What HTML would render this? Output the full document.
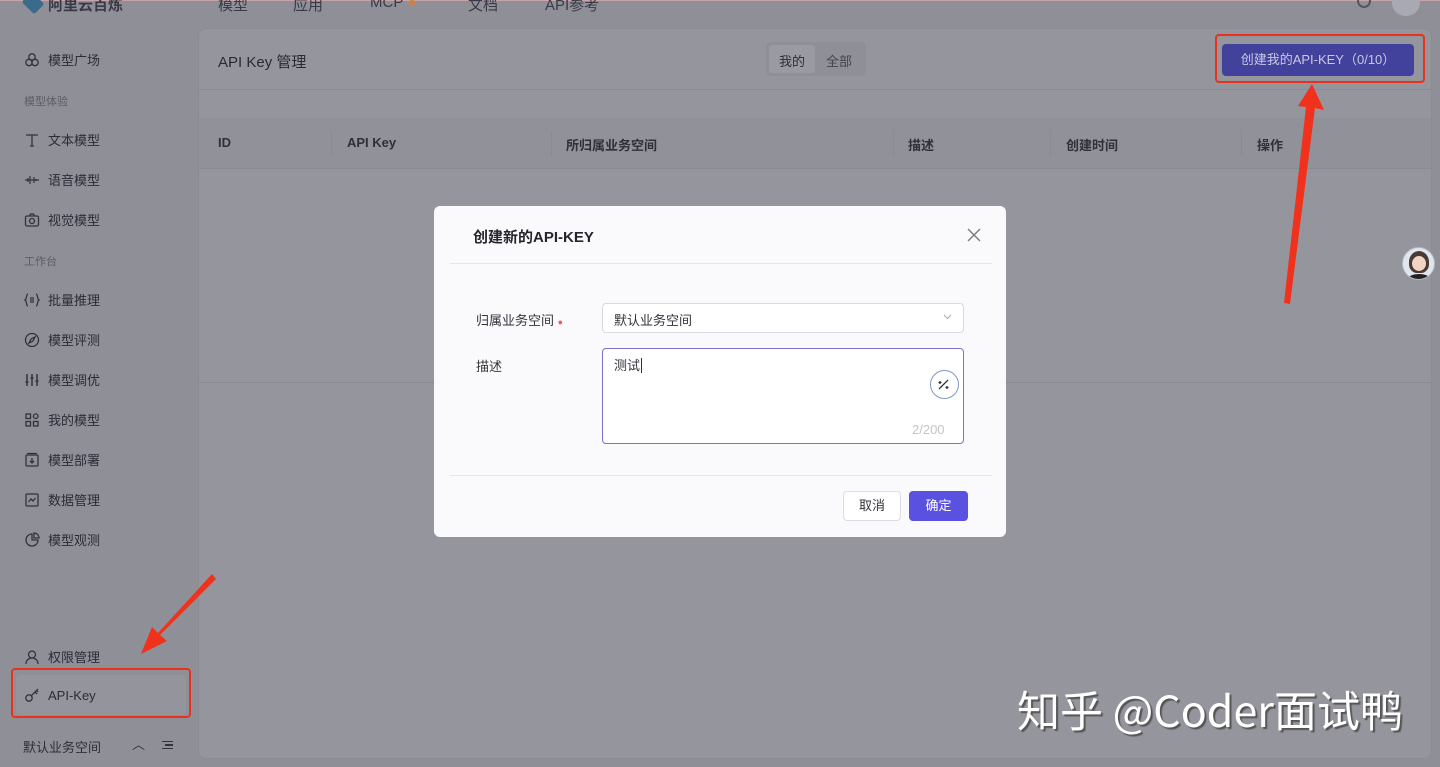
<!DOCTYPE html>
<html><head><meta charset="utf-8"><style>
*{margin:0;padding:0;box-sizing:border-box}
body{width:1440px;height:767px;overflow:hidden;background:#8f8f97;font-family:"Liberation Sans","Noto Sans CJK SC",sans-serif;position:relative;color:#2a2a35}
.a{position:absolute}
.nav{font-size:14px;color:#3a3a46}
.side{font-size:13px;color:#2c2c38}
.side .it{position:absolute;left:24px;display:flex;align-items:center;gap:8px}
.ic{width:16px;height:16px;display:inline-block}
.grp{position:absolute;left:24px;font-size:11px;color:#5c5c66}
.panel{left:198px;top:28px;width:1234px;height:731px;background:#95959d;border-radius:8px;border:1px solid #8b8b93}
.th{font-size:13px;font-weight:bold;color:#30303a;top:135px}
.modal{left:434px;top:206px;width:572px;height:331px;background:#fafafc;border-radius:6px}
</style></head><body>
<div class="a" style="left:0;top:0;width:1440px;height:1px;background:#c9a3a8"></div>
<div class="a" style="left:22px;top:-6px;width:22px;height:18px;background:#3a6b8a;border-radius:3px;transform:rotate(45deg) scale(.8)"></div>
<div class="a nav" style="left:48px;top:-6px;font-size:15px;font-weight:bold">阿里云百炼</div>
<div class="a nav" style="left:218px;top:-6px;font-size:15px">模型</div>
<div class="a nav" style="left:293px;top:-6px;font-size:15px">应用</div>
<div class="a nav" style="left:370px;top:-6px;font-size:15px">MCP <span style="color:#c9834a">●</span></div>
<div class="a nav" style="left:468px;top:-6px;font-size:15px">文档</div>
<div class="a nav" style="left:545px;top:-6px;font-size:15px">API参考</div>
<div class="a" style="left:1357px;top:-6px;width:14px;height:14px;border:2px solid #55555f;border-radius:50%"></div>
<div class="a" style="left:1392px;top:-10px;width:28px;height:26px;background:#a9a9b4;border-radius:50%"></div>

<div class="side">
<div class="it" style="top:50px"><svg class="ic" viewBox="0 0 16 16" fill="none" stroke="#33333d" stroke-width="1.3"><circle cx="8" cy="5" r="3.2"/><circle cx="5" cy="10.5" r="3.2"/><circle cx="11" cy="10.5" r="3.2"/></svg>模型广场</div>
<div class="grp" style="top:93px">模型体验</div>
<div class="it" style="top:130px"><svg class="ic" viewBox="0 0 16 16" fill="none" stroke="#33333d" stroke-width="1.3"><path d="M2 3h12M8 3v11M6 14h4"/></svg>文本模型</div>
<div class="it" style="top:170px"><svg class="ic" viewBox="0 0 16 16" fill="none" stroke="#33333d" stroke-width="1.2"><path d="M1 8h14M4 6v4M6 4v8M10 5v6M12 7v2"/></svg>语音模型</div>
<div class="it" style="top:210px"><svg class="ic" viewBox="0 0 16 16" fill="none" stroke="#33333d" stroke-width="1.3"><rect x="1.5" y="4" width="13" height="10" rx="1.5"/><circle cx="8" cy="9" r="2.5"/><path d="M5.5 4l1-2h3l1 2"/></svg>视觉模型</div>
<div class="grp" style="top:253px">工作台</div>
<div class="it" style="top:290px"><svg class="ic" viewBox="0 0 16 16" fill="none" stroke="#33333d" stroke-width="1.3"><path d="M4 2C2 2 3 7 1 8c2 1 1 6 3 6M12 2c2 0 1 5 3 6-2 1-1 6-3 6M6 6h4M6 8h4M6 10h4"/></svg>批量推理</div>
<div class="it" style="top:330px"><svg class="ic" viewBox="0 0 16 16" fill="none" stroke="#33333d" stroke-width="1.3"><circle cx="8" cy="8" r="6.5"/><path d="M5 11l2-4 4-2-2 4z"/></svg>模型评测</div>
<div class="it" style="top:370px"><svg class="ic" viewBox="0 0 16 16" fill="none" stroke="#33333d" stroke-width="1.5"><path d="M3 2v12M8 2v12M13 2v12M1.5 10h3M6.5 6h3M11.5 9h3"/></svg>模型调优</div>
<div class="it" style="top:410px"><svg class="ic" viewBox="0 0 16 16" fill="none" stroke="#33333d" stroke-width="1.3"><rect x="2" y="2" width="4.5" height="4.5"/><rect x="2" y="9.5" width="4.5" height="4.5"/><rect x="9.5" y="9.5" width="4.5" height="4.5"/><circle cx="11.7" cy="4.2" r="2.3"/></svg>我的模型</div>
<div class="it" style="top:450px"><svg class="ic" viewBox="0 0 16 16" fill="none" stroke="#33333d" stroke-width="1.3"><rect x="2" y="3" width="12" height="11" rx="1"/><path d="M3 1.5h10M8 6v5M6 9l2 2 2-2"/></svg>模型部署</div>
<div class="it" style="top:490px"><svg class="ic" viewBox="0 0 16 16" fill="none" stroke="#33333d" stroke-width="1.3"><rect x="2" y="2" width="12" height="12" rx="1"/><path d="M4.5 10l2.5-3 2 2 2.5-3"/></svg>数据管理</div>
<div class="it" style="top:530px"><svg class="ic" viewBox="0 0 16 16" fill="none" stroke="#33333d" stroke-width="1.3"><path d="M8 2a6 6 0 1 0 6 6H8z"/><path d="M10 1v5h5a5 5 0 0 0-5-5z"/></svg>模型观测</div>
<div class="it" style="top:647px"><svg class="ic" viewBox="0 0 16 16" fill="none" stroke="#33333d" stroke-width="1.3"><circle cx="8" cy="5.5" r="3.5"/><path d="M2 15c0-4 3-6 6-6s6 2 6 6"/></svg>权限管理</div>
</div>
<div class="a" style="left:16px;top:675px;width:170px;height:40px;background:#94949c;border-radius:4px"></div>
<div class="a side" style="left:24px;top:687px;display:flex;align-items:center;gap:8px;font-size:13px"><svg class="ic" viewBox="0 0 16 16" fill="none" stroke="#33333d" stroke-width="1.3"><circle cx="5" cy="11" r="3.2"/><path d="M7.3 8.7L14 2M11 5l2 2M12.5 3.5l1.5 1.5"/></svg>API-Key</div>
<div class="a" style="left:11px;top:668px;width:180px;height:50px;border:2px solid #e8321e;border-radius:4px"></div>
<div class="a" style="left:23px;top:737px;font-size:13px;color:#2e2e38">默认业务空间</div>
<div class="a" style="left:132px;top:734px;font-size:13px;color:#33333d">︿</div>
<div class="a" style="left:162px;top:741px;width:11px;height:8px;border-top:1.5px solid #33333d;border-bottom:1.5px solid #33333d"></div>
<div class="a" style="left:165px;top:744px;width:8px;height:1.5px;background:#33333d"></div>

<div class="a panel"></div>
<div class="a" style="left:218px;top:51px;font-size:15px;color:#2a2a35">API Key 管理</div>
<div class="a" style="left:766px;top:42px;width:100px;height:34px;background:#8f8f97;border-radius:4px"></div>
<div class="a" style="left:769px;top:45px;width:46px;height:28px;background:#9a9aa2;border-radius:3px"></div>
<div class="a" style="left:779px;top:51px;font-size:13px;color:#2e2e38">我的</div>
<div class="a" style="left:826px;top:51px;font-size:13px;color:#44444e">全部</div>
<div class="a" style="left:1222px;top:44px;width:192px;height:32px;background:#42419b;border-radius:4px;color:#c8c8e4;font-size:13px;text-align:center;line-height:32px">创建我的API-KEY（0/10）</div>
<div class="a" style="left:1215px;top:34px;width:210px;height:49px;border:2px solid #e8321e;border-radius:4px"></div>
<div class="a" style="left:199px;top:89px;width:1232px;height:1px;background:#8a8a92"></div>
<div class="a" style="left:199px;top:118px;width:1232px;height:51px;background:#919199;border-bottom:1px solid #8a8a92"></div>
<div class="a th" style="left:218px">ID</div>
<div class="a th" style="left:347px">API Key</div>
<div class="a th" style="left:566px">所归属业务空间</div>
<div class="a th" style="left:908px">描述</div>
<div class="a th" style="left:1066px">创建时间</div>
<div class="a th" style="left:1257px">操作</div>
<div class="a" style="left:331px;top:130px;width:1px;height:26px;background:#8a8a92"></div>
<div class="a" style="left:551px;top:130px;width:1px;height:26px;background:#8a8a92"></div>
<div class="a" style="left:893px;top:130px;width:1px;height:26px;background:#8a8a92"></div>
<div class="a" style="left:1050px;top:130px;width:1px;height:26px;background:#8a8a92"></div>
<div class="a" style="left:1241px;top:130px;width:1px;height:26px;background:#8a8a92"></div>
<div class="a" style="left:199px;top:382px;width:1232px;height:1px;background:#8a8a92"></div>

<div class="a" style="left:1402px;top:247px;width:33px;height:33px;border-radius:50%;background:#dfe6ef;border:1px solid #b8b8c0;overflow:hidden">
<div class="a" style="left:6px;top:3px;width:20px;height:22px;background:#4a3a34;border-radius:50% 50% 40% 40%"></div>
<div class="a" style="left:9px;top:8px;width:14px;height:15px;background:#f2d3c4;border-radius:50%"></div>
<div class="a" style="left:6px;top:26px;width:20px;height:8px;background:#222;border-radius:50% 50% 0 0"></div>
</div>

<div class="a modal"></div>
<div class="a" style="left:473px;top:226px;font-size:15px;font-weight:bold;color:#25252f">创建新的API-KEY</div>
<svg class="a" style="left:967px;top:228px" width="14" height="14" viewBox="0 0 14 14" stroke="#777" stroke-width="1.3"><path d="M1 1l12 12M13 1L1 13"/></svg>
<div class="a" style="left:450px;top:263px;width:542px;height:1px;background:#e6e6ea"></div>
<div class="a" style="left:476px;top:310px;font-size:13px;color:#33333d">归属业务空间 <span style="color:#e26a5a;font-size:9px">●</span></div>
<div class="a" style="left:602px;top:303px;width:362px;height:30px;border:1px solid #d8d8de;border-radius:4px;background:#fff"></div>
<div class="a" style="left:614px;top:310px;font-size:13px;color:#33333d">默认业务空间</div>
<svg class="a" style="left:943px;top:314px" width="9" height="6" viewBox="0 0 9 6" stroke="#aaa" fill="none"><path d="M1 1l3.5 3.5L8 1"/></svg>
<div class="a" style="left:476px;top:356px;font-size:13px;color:#33333d">描述</div>
<div class="a" style="left:602px;top:348px;width:362px;height:96px;border:1.5px solid #7b72d0;border-radius:4px;background:#fff"></div>
<div class="a" style="left:614px;top:355px;font-size:13px;color:#33333d">测试<span style="border-left:1px solid #333;margin-left:1px"></span></div>
<div class="a" style="left:930px;top:370px;width:29px;height:29px;border:1.5px solid #7f99c8;border-radius:50%;background:#fff"></div>
<svg class="a" style="left:937px;top:377px" width="14" height="14" viewBox="0 0 14 14" fill="none" stroke="#333" stroke-width="1.3"><path d="M2 12L11 3M3 4v3M1.5 5.5h3M10 9v3M8.5 10.5h3"/></svg>
<div class="a" style="left:912px;top:422px;font-size:13px;color:#c4c4ca">2/200</div>
<div class="a" style="left:450px;top:475px;width:542px;height:1px;background:#e6e6ea"></div>
<div class="a" style="left:843px;top:491px;width:58px;height:30px;border:1px solid #dcdce2;border-radius:4px;background:#fff;font-size:13px;text-align:center;line-height:28px;color:#33333d">取消</div>
<div class="a" style="left:909px;top:491px;width:59px;height:30px;border-radius:4px;background:#5b51e0;font-size:13px;text-align:center;line-height:30px;color:#fff">确定</div>

<svg class="a" style="left:0;top:0" width="1440" height="767">
<polygon points="1284,303 1290,304 1315,108 1324,110 1312,84 1298,106 1306,107" fill="#f0321c"/>
<polygon points="212,574 216,579 160,635 167,641 141,654 152,627 158,633" fill="#f0321c"/>
</svg>

<div class="a" style="left:1017px;top:678px;font-size:43px;color:#fff;text-shadow:2px 2px 1px #555;font-family:'Noto Sans CJK SC','Liberation Sans',sans-serif;white-space:nowrap;letter-spacing:0px">知乎 @Coder面试鸭</div>
</body></html>
